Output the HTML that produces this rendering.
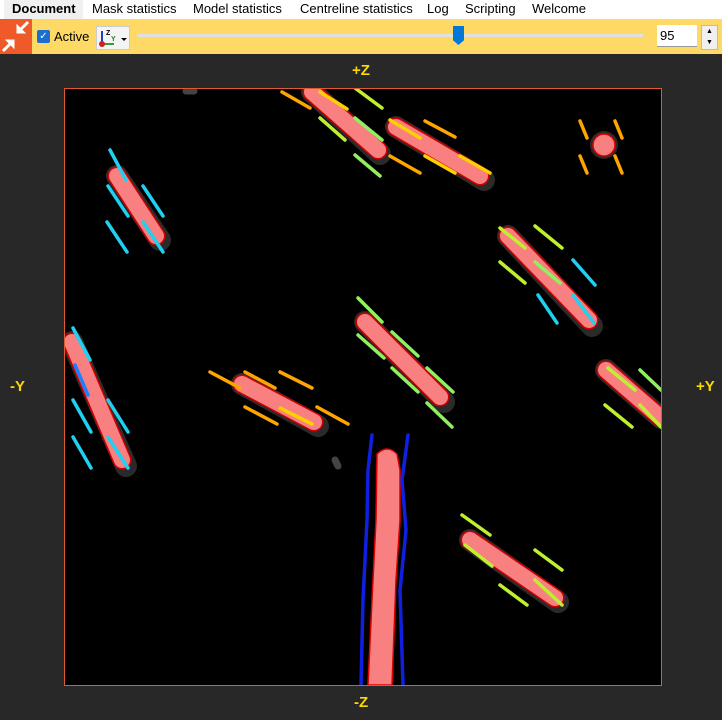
<!DOCTYPE html>
<html><head><meta charset="utf-8"><style>
body{margin:0;width:722px;height:720px;background:#282828;font-family:"Liberation Sans",sans-serif;position:relative;overflow:hidden}
.tabs{position:absolute;left:0;top:0;width:722px;height:19px;background:#fff;font-size:13px}
.tabs span{position:absolute;top:1px}
.tb{position:absolute;left:0;top:19px;width:722px;height:35px;background:#ffd966}
.lbl{position:absolute;color:#ffd700;font-weight:bold;font-size:15px}
</style></head><body>
<div class="tabs">
<div style="position:absolute;left:4px;top:0;width:79px;height:19px;background:#f0f0f0"></div>
<span style="left:12px;font-weight:bold">Document</span>
<span style="left:92px">Mask statistics</span>
<span style="left:193px">Model statistics</span>
<span style="left:300px">Centreline statistics</span>
<span style="left:427px">Log</span>
<span style="left:465px">Scripting</span>
<span style="left:532px">Welcome</span>
</div>
<div class="tb">
<div style="position:absolute;left:0;top:0;width:32px;height:35px;background:#f05a28"></div>
<svg style="position:absolute;left:0;top:0" width="32" height="35"><g stroke="#fff" stroke-width="3" fill="#fff"><line x1="28" y1="3" x2="20" y2="11"/><polygon points="17,6 17,14 25,14" stroke-width="1"/><line x1="3" y1="32" x2="11" y2="24"/><polygon points="14,21 6,21 14,29" stroke-width="1"/></g></svg>
<div style="position:absolute;left:37px;top:11px;width:13px;height:13px;background:#1a6fd0;border-radius:2px;color:#fff;font-size:10px;line-height:13px;text-align:center">✓</div>
<span style="position:absolute;left:54px;top:10px;font-size:13px">Active</span>
<div style="position:absolute;left:96px;top:7px;width:32px;height:22px;background:#f4f4f4;border:1px solid #ccc"></div>
<svg style="position:absolute;left:97px;top:8px" width="32" height="22"><line x1="5" y1="17" x2="5" y2="4" stroke="#2040c0" stroke-width="2"/><line x1="5" y1="17" x2="17" y2="17" stroke="#30a030" stroke-width="2"/><circle cx="5" cy="17" r="3" fill="#d02020"/><text x="9" y="8" font-size="7" font-weight="bold">Z</text><text x="14" y="14" font-size="7" font-weight="bold" fill="#208020">Y</text><polygon points="24,11 30,11 27,14"/></svg>
<div style="position:absolute;left:138px;top:15px;width:505px;height:3px;background:#e0e0e0"></div>
<div style="position:absolute;left:453px;top:7px;width:11px;height:19px;background:#0078d7;clip-path:polygon(0 0,100% 0,100% 75%,50% 100%,0 75%)"></div>
<div style="position:absolute;left:657px;top:6px;width:40px;height:22px;background:#fff;border-bottom:1px solid #999;font-size:13px;line-height:22px;padding-left:3px;box-sizing:border-box">95</div>
<div style="position:absolute;left:701px;top:6px;width:15px;height:23px;background:#f0f0f0;border:1px solid #bbb;font-size:7px;text-align:center;line-height:11px">▲<br>▼</div>
</div>
<div class="lbl" style="left:352px;top:62px">+Z</div>
<div class="lbl" style="left:354px;top:694px">-Z</div>
<div class="lbl" style="left:10px;top:378px">-Y</div>
<div class="lbl" style="left:696px;top:378px">+Y</div>
<svg style="position:absolute;left:0;top:0" width="722" height="720">
<defs><clipPath id="c"><rect x="65" y="89" width="596" height="596"/></clipPath></defs>
<rect x="64.5" y="88.5" width="597" height="597" fill="#000" stroke="#e05a30"/>
<g clip-path="url(#c)" stroke-linecap="round">
<g stroke="#444" stroke-width="7">
<line x1="335" y1="460" x2="338" y2="466"/><line x1="186" y1="91" x2="194" y2="91"/>
</g>
<g stroke="#2a2a2a" stroke-width="22">
<line x1="312" y1="92" x2="380" y2="154"/><line x1="396" y1="127" x2="484" y2="180"/>
<line x1="117" y1="176" x2="160" y2="240"/><line x1="508" y1="236" x2="592" y2="326"/>
<line x1="365" y1="322" x2="444" y2="402"/><line x1="242" y1="384" x2="318" y2="426"/>
<line x1="72" y1="342" x2="126" y2="466"/><line x1="606" y1="370" x2="661" y2="418"/>
<line x1="470" y1="540" x2="558" y2="602"/>
</g>
<circle cx="604" cy="145" r="14" fill="#2a2a2a"/>
<g stroke="#c00" stroke-width="19">
<line x1="312" y1="92" x2="378" y2="150"/><line x1="396" y1="127" x2="480" y2="176"/>
<line x1="117" y1="176" x2="156" y2="236"/><line x1="508" y1="236" x2="589" y2="320"/>
<line x1="365" y1="322" x2="440" y2="397"/><line x1="242" y1="384" x2="314" y2="422"/>
<line x1="72" y1="342" x2="122" y2="460"/><line x1="606" y1="370" x2="661" y2="418"/>
<line x1="470" y1="540" x2="555" y2="598"/>
</g>
<g stroke="#f88080" stroke-width="16">
<line x1="312" y1="92" x2="378" y2="150"/><line x1="396" y1="127" x2="480" y2="176"/>
<line x1="117" y1="176" x2="156" y2="236"/><line x1="508" y1="236" x2="589" y2="320"/>
<line x1="365" y1="322" x2="440" y2="397"/><line x1="242" y1="384" x2="314" y2="422"/>
<line x1="72" y1="342" x2="122" y2="460"/><line x1="606" y1="370" x2="661" y2="418"/>
<line x1="470" y1="540" x2="555" y2="598"/>
</g>
<path d="M377 454 Q387 444 397 454 L400 470 L400 520 L396 580 L392 685 L368 685 L372 600 L376 520 Z" fill="#f88080" stroke="#d00" stroke-width="1.5"/>
<circle cx="604" cy="145" r="11" fill="#f88080" stroke="#d00" stroke-width="1.5"/>
<g stroke-width="3.5" fill="none">
<path d="M372 435 L368 470 L367 520 L363 600 L361 685" stroke="#1020e0"/>
<path d="M408 435 L402 480 L406 530 L400 590 L403 685" stroke="#1020e0"/>
<g stroke="#ffa500"><line x1="282" y1="92" x2="310" y2="108"/><line x1="425" y1="121" x2="455" y2="137"/><line x1="390" y1="156" x2="420" y2="173"/><line x1="580" y1="121" x2="587" y2="138"/><line x1="615" y1="121" x2="622" y2="138"/><line x1="580" y1="156" x2="587" y2="173"/><line x1="615" y1="156" x2="622" y2="173"/><line x1="210" y1="372" x2="240" y2="388"/><line x1="280" y1="372" x2="312" y2="388"/><line x1="245" y1="407" x2="277" y2="424"/><line x1="317" y1="407" x2="348" y2="424"/><line x1="245" y1="372" x2="275" y2="388"/></g>
<g stroke="#ffd000"><line x1="320" y1="92" x2="347" y2="109"/><line x1="390" y1="120" x2="420" y2="138"/><line x1="460" y1="156" x2="490" y2="173"/><line x1="425" y1="156" x2="455" y2="173"/><line x1="280" y1="408" x2="312" y2="424"/></g>
<g stroke="#bff030"><line x1="355" y1="88" x2="382" y2="108"/><line x1="320" y1="118" x2="345" y2="140"/><line x1="500" y1="228" x2="525" y2="248"/><line x1="535" y1="226" x2="562" y2="248"/><line x1="500" y1="262" x2="525" y2="283"/><line x1="608" y1="368" x2="635" y2="390"/><line x1="605" y1="405" x2="632" y2="427"/><line x1="640" y1="405" x2="661" y2="427"/><line x1="462" y1="515" x2="490" y2="535"/><line x1="535" y1="550" x2="562" y2="570"/><line x1="500" y1="585" x2="527" y2="605"/><line x1="465" y1="545" x2="492" y2="566"/><line x1="535" y1="580" x2="562" y2="605"/></g>
<g stroke="#90f060"><line x1="355" y1="118" x2="382" y2="140"/><line x1="355" y1="155" x2="380" y2="176"/><line x1="535" y1="262" x2="560" y2="283"/><line x1="358" y1="298" x2="382" y2="322"/><line x1="358" y1="335" x2="384" y2="358"/><line x1="392" y1="332" x2="418" y2="356"/><line x1="392" y1="368" x2="418" y2="392"/><line x1="427" y1="368" x2="453" y2="392"/><line x1="427" y1="403" x2="452" y2="427"/><line x1="640" y1="370" x2="661" y2="390"/></g>
<g stroke="#20d0f0"><line x1="110" y1="150" x2="126" y2="180"/><line x1="108" y1="186" x2="128" y2="216"/><line x1="143" y1="186" x2="163" y2="216"/><line x1="107" y1="222" x2="127" y2="252"/><line x1="143" y1="222" x2="163" y2="252"/><line x1="73" y1="328" x2="90" y2="360"/><line x1="73" y1="400" x2="91" y2="432"/><line x1="108" y1="400" x2="128" y2="432"/><line x1="73" y1="437" x2="91" y2="468"/><line x1="108" y1="437" x2="128" y2="468"/><line x1="573" y1="260" x2="595" y2="285"/><line x1="538" y1="295" x2="557" y2="323"/><line x1="573" y1="295" x2="594" y2="323"/></g>
<line x1="75" y1="365" x2="88" y2="395" stroke="#1a80ff"/>
</g></g></svg>
</body></html>
